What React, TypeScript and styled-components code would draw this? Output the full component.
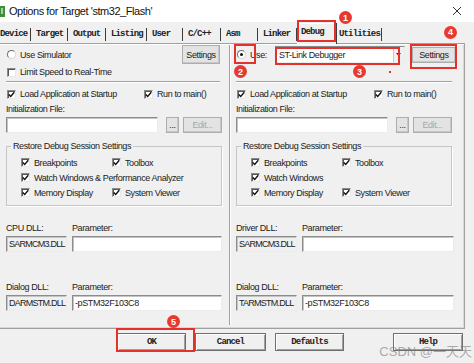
import React from 'react';
import styled, { createGlobalStyle } from 'styled-components';

const GlobalStyle = createGlobalStyle`
    html, body {
        margin: 0;
        padding: 0;
        background: #f0f0f0;
    }
    body {
        font-family: "Liberation Sans", Arial, sans-serif;
        font-size: 9px;
        letter-spacing: -0.4px;
        color: #1b1b1b;
    }
`;

const Window = styled.div`
    position: relative;
    width: 474px;
    height: 363px;
    overflow: hidden;
    background: #f0f0f0;
    display: flex;
    flex-direction: column;
`;

const TitleBar = styled.div`
    height: 22px;
    flex-shrink: 0;
    background: #fff;
    display: flex;
    align-items: center;
    padding-right: 12px;
`;

const TitleText = styled.span`
    margin-left: 3px;
    font-size: 11px;
    letter-spacing: -0.45px;
    color: #111;
`;

const Close = styled.svg`
    margin-left: auto;
`;

const TabBar = styled.div`
    height: 21px;
    flex-shrink: 0;
    display: flex;
    align-items: flex-end;
    margin-left: -5px;
    position: relative;
    z-index: 2;
`;

const Tab = styled.div<{ $w: number; $pad?: number; $active?: boolean }>`
    position: relative;
    box-sizing: border-box;
    width: ${({ $w }) => $w}px;
    padding-left: ${({ $pad }) => $pad ?? 5}px;
    font-family: "Liberation Mono", monospace;
    font-weight: bold;
    font-size: 9px;
    letter-spacing: -0.85px;
    white-space: nowrap;
    color: #222;
    height: ${({ $active }) => ($active ? 21 : 13)}px;
    line-height: ${({ $active }) => ($active ? 19 : 13)}px;
    margin-bottom: ${({ $active }) => ($active ? -1 : 2)}px;
    border-right: 1px solid #3c3c3c;
    background: ${({ $active }) => ($active ? '#f0f0f0' : 'transparent')};
    box-shadow: ${({ $active }) => ($active ? 'inset 1px 1px #fff' : 'none')};
`;

const Panel = styled.div`
    box-sizing: border-box;
    width: 467px;
    height: 286px;
    margin-left: -2px;
    flex-shrink: 0;
    border: 1px solid #a0a0a0;
    box-shadow: inset 1px 1px #fff, inset -1px -1px #d8d8d8;
    padding: 0 10px 0 7px;
    display: grid;
    grid-template-columns: 216px 14px 218px;
`;

const Divider = styled.div`
    justify-self: center;
    width: 1px;
    margin: 1px 0 3px;
    background: #a0a0a0;
    box-shadow: 1px 0 #fff;
`;

const Column = styled.div`
    display: flex;
    flex-direction: column;
`;

const HeaderRow = styled.div`
    height: 21px;
    display: flex;
    align-items: center;
`;

const Row = styled.div<{ $mt?: number }>`
    height: 14px;
    margin-top: ${({ $mt }) => $mt ?? 0}px;
    display: flex;
    align-items: center;
    white-space: nowrap;
`;

const Separator = styled.div`
    height: 1px;
    margin: 2px 2px 1px 0;
    background: #a0a0a0;
    box-shadow: 0 1px #fff;
`;

const Choice = styled.label<{ $w?: number }>`
    display: flex;
    align-items: center;
    gap: 4px;
    white-space: nowrap;
    width: ${({ $w }) => ($w ? `${$w}px` : 'auto')};
    padding-left: 1px;
`;

const Box = styled.span`
    box-sizing: border-box;
    width: 9px;
    height: 9px;
    flex-shrink: 0;
    background: #fff;
    border: 1px solid;
    border-color: #8a8a8a #e8e8e8 #e8e8e8 #8a8a8a;
    box-shadow: inset 1px 1px #555;
    display: inline-flex;
    align-items: center;
    justify-content: center;
`;

const Radio = styled.span<{ $on?: boolean }>`
    box-sizing: border-box;
    width: 9px;
    height: 9px;
    flex-shrink: 0;
    border-radius: 50%;
    background: #fff;
    border: 1px solid;
    border-color: #6f6f6f #d8d8d8 #d8d8d8 #6f6f6f;
    display: inline-flex;
    align-items: center;
    justify-content: center;

    &::after {
        content: '';
        width: 3px;
        height: 3px;
        border-radius: 50%;
        background: ${({ $on }) => ($on ? '#111' : 'transparent')};
    }
`;

const Button = styled.div<{ $w: number; $h?: number; $disabled?: boolean }>`
    box-sizing: border-box;
    width: ${({ $w }) => $w}px;
    height: ${({ $h }) => $h ?? 17}px;
    flex-shrink: 0;
    background: #e3e3e3;
    border: 1px solid #adadad;
    box-shadow: inset -1px -1px #c8c8c8;
    display: flex;
    align-items: center;
    justify-content: center;
    color: ${({ $disabled }) => ($disabled ? '#a8a8a8' : '#1b1b1b')};
`;

const Field = styled.div<{ $w?: number; $grey?: boolean }>`
    box-sizing: border-box;
    height: 16px;
    width: ${({ $w }) => ($w ? `${$w}px` : 'auto')};
    background: ${({ $grey }) => ($grey ? '#f0f0f0' : '#fff')};
    border: 1px solid;
    border-color: #8c8c8c #ececec #ececec #8c8c8c;
    box-shadow: inset 1px 1px #c4c4c4;
    padding-left: 2px;
    letter-spacing: ${({ $grey }) => ($grey ? '-0.75px' : '-0.4px')};
    display: flex;
    align-items: center;
    white-space: nowrap;
`;

const InputRow = styled.div`
    height: 16px;
    margin-top: 1px;
    display: flex;
    align-items: center;
`;

const Group = styled.fieldset`
    box-sizing: border-box;
    width: 216px;
    min-width: 0;
    margin: 7px 0 0;
    padding: 3px 0 5px 13px;
    border: 1px solid #c6c6c6;
    box-shadow: 1px 1px #fff;
`;

const Legend = styled.legend`
    padding: 0 2px;
    margin-left: -9px;
    line-height: 12px;
`;

const GroupRow = styled.div`
    height: 15px;
    display: grid;
    grid-template-columns: 91px auto;
    align-items: center;
`;

const DllLabels = styled.div<{ $mt: number }>`
    height: 14px;
    margin-top: ${({ $mt }) => $mt}px;
    display: grid;
    grid-template-columns: 66px 1fr;
    align-items: center;
`;

const DllInputs = styled.div`
    margin-top: 1px;
    display: grid;
    grid-template-columns: 61px 1fr;
    gap: 5px;
`;

const Select = styled.div`
    box-sizing: border-box;
    width: 130px;
    height: 17px;
    background: #fff;
    border: 1px solid;
    border-color: #8c8c8c #ececec #ececec #8c8c8c;
    box-shadow: inset 1px 1px #c4c4c4;
    display: flex;
    align-items: center;
    padding-left: 3px;
`;

const SelectArrow = styled.span`
    box-sizing: border-box;
    margin-left: auto;
    width: 11px;
    height: 15px;
    background: #f0f0f0;
    border-left: 1px solid #c8c8c8;
    display: flex;
    align-items: center;
    justify-content: center;
`;

const ButtonBar = styled.div`
    flex: 1;
    display: flex;
    align-items: flex-start;
    padding: 4px 11px 0 117px;
    gap: 9px;
`;

const DialogButton = styled.div<{ $w: number; $push?: boolean }>`
    box-sizing: border-box;
    width: ${({ $w }) => $w}px;
    height: 18px;
    margin-left: ${({ $push }) => ($push ? 'auto' : '0')};
    background: #f0f0f0;
    border: 1px solid #6e6e6e;
    box-shadow: inset 1px 1px #fff, inset -1px -1px #a0a0a0;
    display: flex;
    align-items: center;
    justify-content: center;
    font-family: "Liberation Mono", monospace;
    font-weight: bold;
    font-size: 9px;
    letter-spacing: -0.85px;
    color: #222;
`;

/* annotation overlays: red frames and numbered dots */
const Marked = styled.div`
    position: relative;
    display: flex;
    align-items: center;
`;

const RedFrame = styled.span<{ $x: number; $y: number; $w: number; $h: number }>`
    position: absolute;
    left: ${({ $x }) => $x}px;
    top: ${({ $y }) => $y}px;
    width: ${({ $w }) => $w}px;
    height: ${({ $h }) => $h}px;
    box-sizing: border-box;
    border: 2px solid #e3322c;
    pointer-events: none;
    z-index: 3;
`;

const Badge = styled.span<{ $x: number; $y: number }>`
    position: absolute;
    left: ${({ $x }) => $x}px;
    top: ${({ $y }) => $y}px;
    width: 13px;
    height: 13px;
    border-radius: 50%;
    background: #e8392f;
    color: #fff;
    font-family: "Liberation Sans", Arial, sans-serif;
    font-weight: bold;
    font-size: 9px;
    letter-spacing: 0;
    display: flex;
    align-items: center;
    justify-content: center;
    z-index: 4;
`;

const Dot = styled.span`
    position: absolute;
    left: 114px;
    top: 25px;
    width: 2px;
    height: 2px;
    background: #e3322c;
`;

const Watermark = styled.div`
    position: absolute;
    right: 2px;
    bottom: 3px;
    font-family: "Liberation Sans", "Noto Sans CJK SC", sans-serif;
    font-size: 13px;
    letter-spacing: 0;
    color: rgba(120, 120, 120, 0.6);
    white-space: nowrap;
`;

const Check = () => (
    <svg width="7" height="7" viewBox="0 0 7 7">
        <path d="M0.8 3.4 L2.7 5.4 L6.3 1.2" fill="none" stroke="#111" strokeWidth="1.4" />
    </svg>
);

const CheckItem = ({ label, w }: { label: string; w?: number }) => (
    <Choice $w={w}>
        <Box>
            <Check />
        </Box>
        {label}
    </Choice>
);

const tabs = [
    { label: 'Device', w: 36 },
    { label: 'Target', w: 37 },
    { label: 'Output', w: 38 },
    { label: 'Listing', w: 41 },
    { label: 'User', w: 36 },
    { label: 'C/C++', w: 38 },
    { label: 'Asm', w: 37 },
    { label: 'Linker', w: 39 },
    { label: 'Debug', w: 40, pad: 4, active: true },
    { label: 'Utilities', w: 45, pad: 2 },
];

type SideProps = {
    header: React.ReactNode;
    secondRow?: React.ReactNode;
    watchLabel: string;
    dllLabel: string;
    dll: string;
    dialogDll: string;
};

const Side = ({ header, secondRow, watchLabel, dllLabel, dll, dialogDll }: SideProps) => (
    <Column>
        <HeaderRow>{header}</HeaderRow>
        <Row>{secondRow}</Row>
        <Separator />
        <Row $mt={4}>
            <CheckItem label="Load Application at Startup" w={136} />
            <CheckItem label="Run to main()" />
        </Row>
        <Row $mt={1}>Initialization File:</Row>
        <InputRow>
            <Field $w={152} />
            <Button $w={13} $h={16} style={{ marginLeft: 8 }}>
                ...
            </Button>
            <Button $w={39} $h={16} $disabled style={{ marginLeft: 4 }}>
                Edit...
            </Button>
        </InputRow>
        <Group>
            <Legend>Restore Debug Session Settings</Legend>
            <GroupRow>
                <CheckItem label="Breakpoints" />
                <CheckItem label="Toolbox" />
            </GroupRow>
            <GroupRow>
                <CheckItem label={watchLabel} />
            </GroupRow>
            <GroupRow>
                <CheckItem label="Memory Display" />
                <CheckItem label="System Viewer" />
            </GroupRow>
        </Group>
        <DllLabels $mt={15}>
            <span>{dllLabel}</span>
            <span>Parameter:</span>
        </DllLabels>
        <DllInputs>
            <Field $grey>{dll}</Field>
            <Field />
        </DllInputs>
        <DllLabels $mt={28}>
            <span>Dialog DLL:</span>
            <span>Parameter:</span>
        </DllLabels>
        <DllInputs>
            <Field $grey>{dialogDll}</Field>
            <Field>-pSTM32F103C8</Field>
        </DllInputs>
    </Column>
);

const App = () => (
    <>
        <GlobalStyle />
        <Window>
            <TitleBar>
                <svg width="6" height="11" viewBox="0 0 6 11">
                    <rect x="0" y="0" width="5" height="11" fill="#3f8f3a" />
                    <rect x="1" y="2" width="2" height="6" fill="#9fd49a" />
                </svg>
                <TitleText>Options for Target 'stm32_Flash'</TitleText>
                <Close width="10" height="10" viewBox="0 0 10 10">
                    <path d="M1 1 L9 9 M9 1 L1 9" stroke="#333" strokeWidth="1" />
                </Close>
            </TitleBar>

            <TabBar>
                {tabs.map(tab =>
                    tab.active ? (
                        <Marked key={tab.label}>
                            <Tab $w={tab.w} $pad={tab.pad} $active>
                                {tab.label}
                            </Tab>
                            <RedFrame $x={0} $y={-3} $w={39} $h={22} />
                            <Badge $x={42} $y={-12}>
                                1
                            </Badge>
                        </Marked>
                    ) : (
                        <Tab key={tab.label} $w={tab.w} $pad={tab.pad}>
                            {tab.label}
                        </Tab>
                    ),
                )}
            </TabBar>

            <Panel>
                <Side
                    header={
                        <>
                            <Choice>
                                <Radio />
                                Use Simulator
                            </Choice>
                            <Button $w={38} $h={19} style={{ marginLeft: 'auto', marginRight: 2 }}>
                                Settings
                            </Button>
                        </>
                    }
                    secondRow={
                        <Choice>
                            <Box />
                            Limit Speed to Real-Time
                        </Choice>
                    }
                    watchLabel="Watch Windows & Performance Analyzer"
                    dllLabel="CPU DLL:"
                    dll="SARMCM3.DLL"
                    dialogDll="DARMSTM.DLL"
                />
                <Divider />
                <Side
                    header={
                        <>
                            <Marked style={{ height: 21 }}>
                                <Choice>
                                    <Radio $on />
                                    Use:
                                </Choice>
                                <RedFrame $x={-2} $y={0} $w={22} $h={20} />
                                <Badge $x={-2} $y={21}>
                                    2
                                </Badge>
                            </Marked>
                            <Marked style={{ marginLeft: 8 }}>
                                <Select>
                                    ST-Link Debugger
                                    <SelectArrow>
                                        <svg width="5" height="3" viewBox="0 0 5 3">
                                            <path d="M0 0 H5 L2.5 3 Z" fill="#333" />
                                        </svg>
                                    </SelectArrow>
                                </Select>
                                <RedFrame $x={0} $y={1} $w={125} $h={18} />
                                <Badge $x={78} $y={19}>
                                    3
                                </Badge>
                                <Dot />
                            </Marked>
                            <Marked style={{ marginLeft: 7 }}>
                                <Button $w={44} $h={16}>
                                    Settings
                                </Button>
                                <RedFrame $x={-2} $y={-3} $w={47} $h={25} />
                                <Badge $x={32} $y={-21}>
                                    4
                                </Badge>
                            </Marked>
                        </>
                    }
                    watchLabel="Watch Windows"
                    dllLabel="Driver DLL:"
                    dll="SARMCM3.DLL"
                    dialogDll="TARMSTM.DLL"
                />
            </Panel>

            <ButtonBar>
                <Marked>
                    <DialogButton $w={69}>OK</DialogButton>
                    <RedFrame $x={-1} $y={-5} $w={79} $h={24} />
                    <Badge $x={50} $y={-18}>
                        5
                    </Badge>
                </Marked>
                <DialogButton $w={71}>Cancel</DialogButton>
                <DialogButton $w={69}>Defaults</DialogButton>
                <DialogButton $w={70} $push>
                    Help
                </DialogButton>
            </ButtonBar>

            <Watermark>CSDN @一天天</Watermark>
        </Window>
    </>
);

export default App;
